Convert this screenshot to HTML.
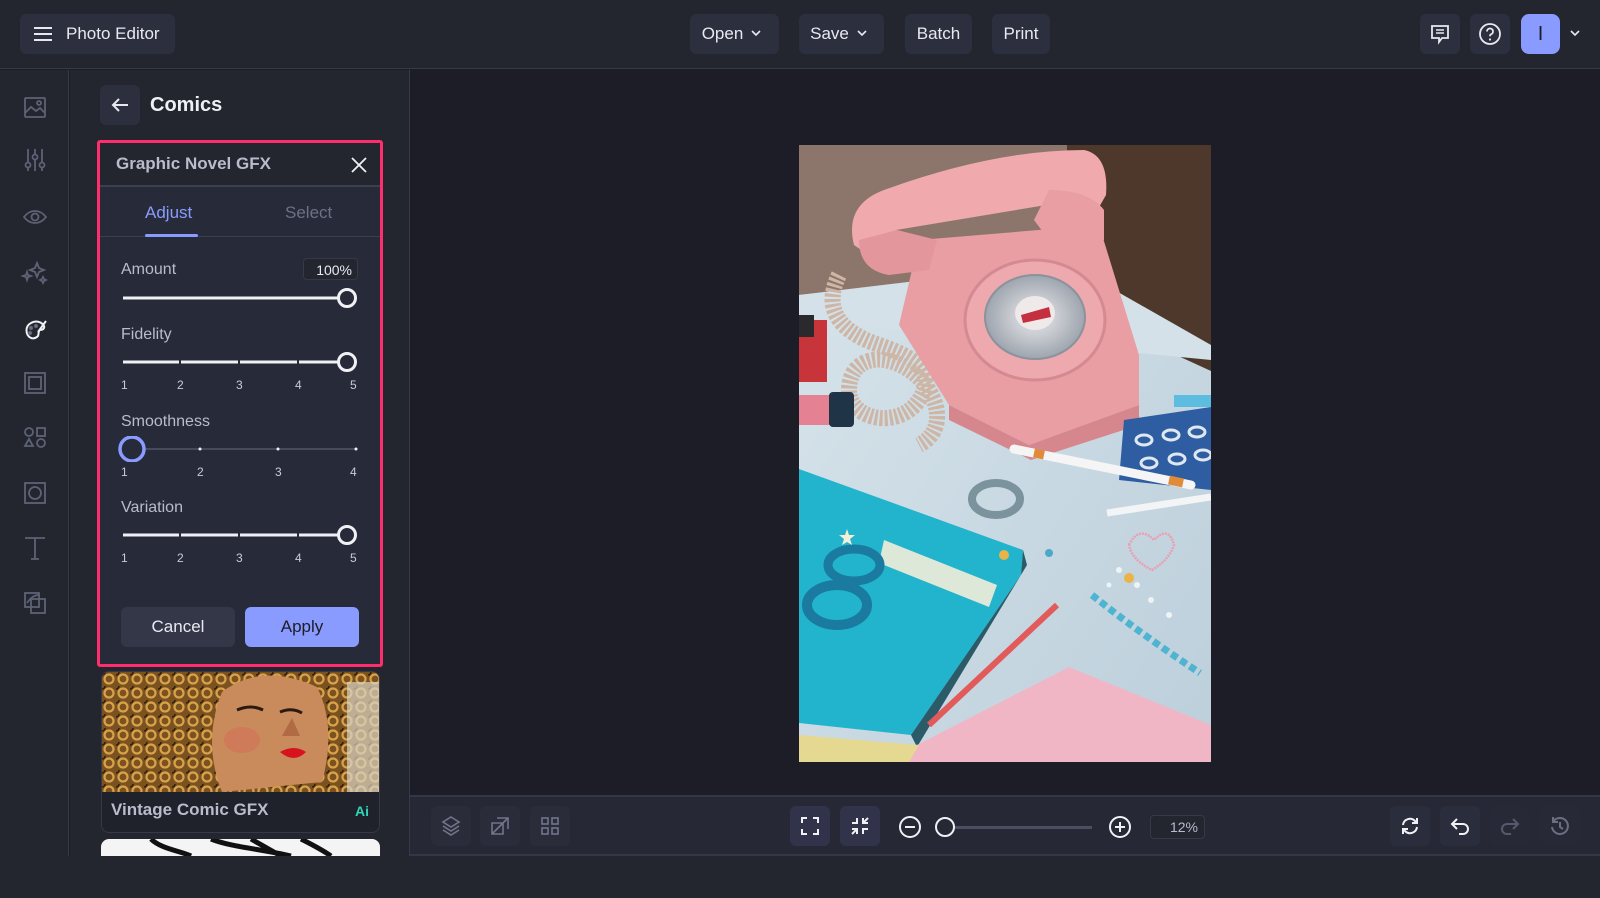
<!DOCTYPE html>
<html><head><meta charset="utf-8"><style>
*{box-sizing:border-box;margin:0;padding:0}
body{width:1600px;height:898px;background:#1c1d26;font-family:"Liberation Sans",sans-serif;color:#e8e9f0;position:relative;overflow:hidden}
.abs{position:absolute}
.btn{position:absolute;background:#2c2f3d;border-radius:6px;color:#e8e9f0;font-size:17px;display:flex;align-items:center;justify-content:center}
.tb{position:absolute;width:40px;height:40px;border-radius:6px;background:#2a2d3b;display:flex;align-items:center;justify-content:center}
.lbl{position:absolute;left:121px;font-size:16px;color:#b9bccb}
.num{position:absolute;font-size:12px;color:#c9ccd8}
svg{display:block}
</style></head><body>
<!-- top bar -->
<div class="abs" style="left:0;top:0;width:1600px;height:69px;background:#23252f;border-bottom:1px solid #363947"></div>
<div class="btn" style="left:20px;top:14px;width:155px;height:40px;justify-content:flex-start;padding-left:12px">
<svg width="22" height="18"><path d="M2 3h18M2 9h18M2 15h18" stroke="#e8e9f0" stroke-width="2"/></svg><span style="margin-left:12px">Photo Editor</span></div>
<div class="btn" style="left:690px;top:14px;width:89px;height:40px">Open<svg width="24" height="12"><path d="M9 3l4 4 4-4" stroke="#e8e9f0" stroke-width="1.6" fill="none"/></svg></div>
<div class="btn" style="left:799px;top:14px;width:85px;height:40px">Save<svg width="24" height="12"><path d="M9 3l4 4 4-4" stroke="#e8e9f0" stroke-width="1.6" fill="none"/></svg></div>
<div class="btn" style="left:905px;top:14px;width:67px;height:40px">Batch</div>
<div class="btn" style="left:992px;top:14px;width:58px;height:40px">Print</div>
<div class="btn" style="left:1420px;top:14px;width:40px;height:40px"><svg width="22" height="22"><path d="M3 3h16v12h-6l-3 4v-4H3z" stroke="#e8e9f0" stroke-width="1.8" fill="none"/><path d="M7 7h8M7 10h8" stroke="#e8e9f0" stroke-width="1.6"/></svg></div>
<div class="btn" style="left:1470px;top:14px;width:40px;height:40px"><svg width="24" height="24"><circle cx="12" cy="12" r="10" stroke="#e8e9f0" stroke-width="1.8" fill="none"/><path d="M9 9.5a3 3 0 1 1 4 2.8c-1 .4-1 1-1 2" stroke="#e8e9f0" stroke-width="1.8" fill="none"/><circle cx="12" cy="17.5" r="1.1" fill="#e8e9f0"/></svg></div>
<div class="btn" style="left:1521px;top:14px;width:39px;height:40px;background:#8a9bff;border-radius:8px;color:#1c1d26;font-size:20px">I</div>
<svg class="abs" style="left:1568px;top:28px" width="14" height="10"><path d="M3 3l4 4 4-4" stroke="#e8e9f0" stroke-width="1.6" fill="none"/></svg>

<!-- left rail -->
<div class="abs" style="left:0;top:70px;width:69px;height:786px;background:#23252f;border-right:1px solid #363947"></div>
<div class="abs" style="left:70px;top:70px;width:340px;height:786px;background:#23252f;border-right:1px solid #363947"></div>
<svg class="abs" style="left:0;top:70px" width="69" height="560" fill="none" stroke="#5d6275" stroke-width="1.8">
<rect x="25" y="28" width="20" height="19" rx="1"/><path d="M25 43l6-6 5 4 4-3 5 5"/><circle cx="39" cy="33" r="2"/>
<path d="M28 79v22M35 79v22M42 79v22"/><circle cx="28" cy="95" r="2.5" fill="#23252f"/><circle cx="35" cy="87" r="2.5" fill="#23252f"/><circle cx="42" cy="95" r="2.5" fill="#23252f"/>
<path d="M24 147c6-8 16-8 22 0c-6 8-16 8-22 0z"/><circle cx="35" cy="147" r="3.5"/>
<path d="M37 193l2 5 5 2-5 2-2 5-2-5-5-2 5-2z M27 202l1 3 3 1-3 1-1 3-1-3-3-1 3-1z M43 207l1 2 2 1-2 1-1 2-1-2-2-1 2-1z"/>
<path d="M31 268c-6-3-6-12 0-15 5-3 11-1 13 3 1 3-2 4-4 4-2 1-1 4-2 6-2 2-4 3-7 2z" stroke="#f0f1f5" stroke-width="2"/><circle cx="31" cy="258" r="1.3" fill="#f0f1f5"/><circle cx="36" cy="256" r="1.3" fill="#f0f1f5"/><circle cx="30" cy="263" r="1.3" fill="#f0f1f5"/><path d="M38 262l8-11" stroke="#f0f1f5" stroke-width="2"/>
<rect x="25" y="303" width="20" height="20"/><rect x="29" y="307" width="12" height="12"/>
<circle cx="29" cy="362" r="4"/><rect x="37" y="358" width="8" height="8"/><path d="M25 376l4-7 4 7z"/><circle cx="41" cy="373" r="4"/>
<rect x="25" y="413" width="20" height="20"/><circle cx="35" cy="423" r="6"/>
<path d="M25 468h20M35 468v21M31 489h8"/>
<rect x="25" y="523" width="14" height="14"/><rect x="31" y="529" width="14" height="14"/><path d="M27 533c4-6 8-8 12-8"/>
</svg>

<!-- panel header -->
<div class="btn" style="left:100px;top:85px;width:40px;height:40px"><svg width="20" height="16"><path d="M18 8H3M9 2L3 8l6 6" stroke="#e8e9f0" stroke-width="2" fill="none"/></svg></div>
<div class="abs" style="left:150px;top:94px;font-size:20px;font-weight:bold;color:#eef0f5">Comics</div>

<!-- pink box -->
<div class="abs" style="left:97px;top:140px;width:286px;height:527px;border:3px solid #ff2d6b;border-radius:3px;background:#272a38"></div>
<div class="abs" style="left:100px;top:143px;width:280px;height:44px;background:#23252f;border-bottom:2px solid #3b3f50"></div>
<div class="abs" style="left:116px;top:154px;font-size:17px;font-weight:bold;color:#b9bccb">Graphic Novel GFX</div>
<svg class="abs" style="left:350px;top:156px" width="18" height="18"><path d="M2 2l14 14M16 2L2 16" stroke="#f0f1f5" stroke-width="1.8"/></svg>
<div class="abs" style="left:100px;top:236px;width:280px;height:1px;background:#3b3f50"></div>
<div class="abs" style="left:145px;top:203px;font-size:17px;color:#8a9bff">Adjust</div>
<div class="abs" style="left:145px;top:234px;width:53px;height:3px;background:#8a9bff;border-radius:2px"></div>
<div class="abs" style="left:285px;top:203px;font-size:17px;color:#6d7185">Select</div>

<div class="lbl" style="top:261px">Amount</div>
<div class="abs" style="left:303px;top:258px;width:55px;height:22px;border:1px solid #363947;border-radius:4px;background:#23252f;font-size:14px;text-align:right;padding:3px 5px 0 0">100%</div>
<svg class="abs" style="left:115px;top:285px" width="250" height="30">
<path d="M8 13H232" stroke="#f0f1f5" stroke-width="3"/><circle cx="232" cy="13" r="8.5" fill="#272a38" stroke="#f0f1f5" stroke-width="3"/></svg>

<div class="lbl" style="top:326px">Fidelity</div>
<svg class="abs" style="left:115px;top:350px" width="250" height="26">
<path d="M8 12H232" stroke="#f0f1f5" stroke-width="3"/><path d="M65 10v4M124 10v4M183 10v4" stroke="#272a38" stroke-width="2"/><circle cx="232" cy="12" r="8.5" fill="#272a38" stroke="#f0f1f5" stroke-width="3"/></svg>
<div class="num" style="left:121px;top:378px">1</div><div class="num" style="left:177px;top:378px">2</div><div class="num" style="left:236px;top:378px">3</div><div class="num" style="left:295px;top:378px">4</div><div class="num" style="left:350px;top:378px">5</div>

<div class="lbl" style="top:413px">Smoothness</div>
<svg class="abs" style="left:115px;top:436px" width="250" height="26">
<path d="M18 13H242" stroke="#464a5c" stroke-width="2"/><circle cx="85" cy="13" r="1.5" fill="#f0f1f5"/><circle cx="163" cy="13" r="1.5" fill="#f0f1f5"/><circle cx="241" cy="13" r="1.5" fill="#f0f1f5"/><circle cx="17" cy="13" r="12" fill="#272a38" stroke="#8a9bff" stroke-width="3.5"/></svg>
<div class="num" style="left:121px;top:465px">1</div><div class="num" style="left:197px;top:465px">2</div><div class="num" style="left:275px;top:465px">3</div><div class="num" style="left:350px;top:465px">4</div>

<div class="lbl" style="top:499px">Variation</div>
<svg class="abs" style="left:115px;top:523px" width="250" height="26">
<path d="M8 12H232" stroke="#f0f1f5" stroke-width="3"/><path d="M65 10v4M124 10v4M183 10v4" stroke="#272a38" stroke-width="2"/><circle cx="232" cy="12" r="8.5" fill="#272a38" stroke="#f0f1f5" stroke-width="3"/></svg>
<div class="num" style="left:121px;top:551px">1</div><div class="num" style="left:177px;top:551px">2</div><div class="num" style="left:236px;top:551px">3</div><div class="num" style="left:295px;top:551px">4</div><div class="num" style="left:350px;top:551px">5</div>

<div class="btn" style="left:121px;top:607px;width:114px;height:40px;background:#343747">Cancel</div>
<div class="btn" style="left:245px;top:607px;width:114px;height:40px;background:#8a9bff;color:#1c1d26">Apply</div>

<!-- card -->
<div class="abs" style="left:101px;top:671px;width:279px;height:162px;border:1px solid #363947;border-radius:8px;background:#1f212b;overflow:hidden">
<svg width="279" height="120" style="display:block">
<defs><pattern id="curl" width="14" height="14" patternUnits="userSpaceOnUse"><rect width="14" height="14" fill="#7a5220"/><circle cx="7" cy="7" r="4.5" fill="none" stroke="#d9a24a" stroke-width="2.2"/><circle cx="0" cy="0" r="3" fill="none" stroke="#2e1c0c" stroke-width="1.5"/></pattern></defs>
<rect width="279" height="120" fill="url(#curl)"/><rect x="245" y="10" width="34" height="110" fill="#d9d4c4" opacity=".7"/>
<path d="M120 20q40-30 95-5q20 40 5 95l-100 10q-20-50 0-100z" fill="#c98a5c"/>
<ellipse cx="140" cy="68" rx="18" ry="13" fill="#d66a55" opacity=".5"/>
<path d="M135 38q14-6 26 0M178 40q12-5 22 1" stroke="#2a1a12" stroke-width="3" fill="none"/>
<path d="M180 64l10-18 8 18z" fill="#b06a44"/>
<path d="M178 80q14-8 26 0q-12 12-26 0z" fill="#d7141e"/></svg>
<div style="position:absolute;left:9px;top:128px;font-size:17px;font-weight:bold;color:#b9bccb">Vintage Comic GFX</div>
<div style="position:absolute;right:10px;top:131px;font-size:14px;font-weight:bold;color:#2fd6b5">Ai</div>
</div>
<div class="abs" style="left:101px;top:839px;width:279px;height:17px;background:#f4f4f4;border-radius:8px 8px 0 0;overflow:hidden"><svg width="279" height="17"><path d="M50 0c10 10 30 12 40 17M110 0c20 8 50 10 80 17M150 0l30 17M200 0c10 5 20 10 30 17" stroke="#111" stroke-width="5" fill="none"/></svg></div>

<!-- photo -->
<svg class="abs" style="left:799px;top:145px" width="412" height="617">
<defs>
<linearGradient id="tb" x1="0" y1="0" x2="1" y2="1"><stop offset="0" stop-color="#d9e5ec"/><stop offset="1" stop-color="#bccfdb"/></linearGradient>
<radialGradient id="dl" cx=".5" cy=".5" r=".5"><stop offset="0" stop-color="#e4e4e8"/><stop offset=".45" stop-color="#c9ccd2"/><stop offset="1" stop-color="#9ea5ae"/></radialGradient>
</defs>
<rect width="412" height="617" fill="url(#tb)"/>
<path d="M0 0H268V120L0 150z" fill="#8c766b"/>
<path d="M268 0H412V226L268 160z" fill="#4e382c"/>
<path d="M0 150L268 118 412 200 412 215 0 175z" fill="#d4e1e9"/>
<!-- cord -->
<path d="M40 130c-20 40 10 60 40 70s60 25 40 55-70 20-70-10 30-40 60-20 40 60 10 75" stroke="#cdb6a5" stroke-width="16" fill="none" stroke-dasharray="3 2"/>
<!-- phone body -->
<path d="M120 95L300 80 340 210 340 260 230 300 150 260 100 180z" fill="#e99ea4"/>
<path d="M150 260L230 300 340 260 340 280 232 315 150 275z" fill="#d6878e"/>
<ellipse cx="236" cy="175" rx="70" ry="60" fill="#eda9ae" stroke="#d48a90" stroke-width="3"/>
<ellipse cx="236" cy="172" rx="50" ry="42" fill="url(#dl)" stroke="#8a929c" stroke-width="2"/>
<ellipse cx="236" cy="168" rx="20" ry="17" fill="#efeae9"/><path d="M222 170l28-8 2 10-28 6z" fill="#c53040"/>
<!-- handset -->
<path d="M55 100q-10-40 30-55q110-40 200-40q25 5 22 45l-20 35-40-25-150 25-20 30z" fill="#f0aaae"/>
<path d="M60 95q0 30 30 35l40-5 8-30-40-10z" fill="#e3979c"/>
<path d="M250 45q40 0 55 20l0 30-40 20-30-40z" fill="#e89ea3"/>
<!-- left objects -->
<rect x="0" y="175" width="28" height="62" fill="#c7343a"/><rect x="0" y="170" width="15" height="22" fill="#2a2a2e"/>
<rect x="0" y="250" width="40" height="30" fill="#e48293"/><rect x="30" y="247" width="25" height="35" rx="4" fill="#1f3446"/>
<!-- patterned paper -->
<path d="M325 275L412 262V345L320 335z" fill="#2f5da2"/>
<g fill="none" stroke="#dfe8f0" stroke-width="3"><ellipse cx="345" cy="295" rx="8" ry="5"/><ellipse cx="372" cy="290" rx="8" ry="5"/><ellipse cx="398" cy="287" rx="8" ry="5"/><ellipse cx="350" cy="318" rx="8" ry="5"/><ellipse cx="378" cy="314" rx="8" ry="5"/><ellipse cx="404" cy="310" rx="8" ry="5"/></g>
<rect x="375" y="250" width="37" height="12" fill="#5cbde0"/>
<!-- pens -->
<path d="M215 304L392 340" stroke="#f5f5f5" stroke-width="9" stroke-linecap="round"/><path d="M235 308l10 2M370 335l14 3" stroke="#e08a3a" stroke-width="9"/>
<path d="M308 368L412 352" stroke="#f2f4f6" stroke-width="7"/>
<ellipse cx="197" cy="354" rx="24" ry="16" fill="none" stroke="#7a939c" stroke-width="8"/>
<!-- book -->
<path d="M0 324L224 405 222 430 112 590 0 578z" fill="#22b4cc"/>
<path d="M224 405L228 420 118 602 112 590 222 430z" fill="#2b5a68"/>
<path d="M85 395L198 440 190 462 80 418z" fill="#dde8d8"/>
<ellipse cx="55" cy="420" rx="26" ry="16" fill="none" stroke="#1a7aa0" stroke-width="9"/>
<ellipse cx="38" cy="460" rx="30" ry="20" fill="none" stroke="#1a7aa0" stroke-width="10"/>
<path d="M40 390l5 4-2 6 5-3 5 3-2-6 5-4h-6l-2-6-2 6z" fill="#f4efd8"/>
<!-- pink paper -->
<path d="M118 600L270 522 412 580 412 617 110 617z" fill="#f0b6c6"/>
<path d="M130 580L258 460" stroke="#e35a5a" stroke-width="6"/>
<path d="M0 590L120 600 110 617 0 617z" fill="#e5d890"/>
<!-- beads -->
<path d="M293 450q50 40 108 78" stroke="#4fb3d2" stroke-width="7" fill="none" stroke-dasharray="7 4"/>
<path d="M330 400q10-20 25-5q15-15 20 5q-5 15-22 25q-20-10-23-25z" fill="none" stroke="#e9a0b0" stroke-width="2.5" stroke-dasharray="2 1"/>
<g fill="#eef3f6"><circle cx="320" cy="425" r="3"/><circle cx="338" cy="440" r="3"/><circle cx="352" cy="455" r="3"/><circle cx="370" cy="470" r="3"/><circle cx="310" cy="440" r="2.5"/></g>
<circle cx="330" cy="433" r="5" fill="#e8b347"/><circle cx="205" cy="410" r="5" fill="#e8b347"/><circle cx="250" cy="408" r="4" fill="#4aa9c9"/>
</svg>

<!-- bottom toolbar -->
<div class="abs" style="left:410px;top:795px;width:1190px;height:61px;background:#262836;border-top:2px solid #343747;border-bottom:2px solid #343747"></div>
<div class="abs" style="left:0;top:856px;width:1600px;height:42px;background:#23252f"></div>
<div class="tb" style="left:431px;top:806px;background:#2a2c39"><svg width="22" height="24" fill="none" stroke="#70758a" stroke-width="1.6"><path d="M11 3l8 5-8 5-8-5z M3 12l8 5 8-5 M3 16l8 5 8-5"/></svg></div>
<div class="tb" style="left:480px;top:806px;background:#2a2c39"><svg width="22" height="22" fill="none" stroke="#70758a" stroke-width="1.6"><path d="M8 3h11v11M3 8h11v11H3z M3 19L19 3"/></svg></div>
<div class="tb" style="left:530px;top:806px;background:#2a2c39"><svg width="22" height="22" fill="none" stroke="#70758a" stroke-width="1.6"><rect x="3" y="3" width="6" height="6"/><rect x="13" y="3" width="6" height="6"/><rect x="3" y="13" width="6" height="6"/><rect x="13" y="13" width="6" height="6"/></svg></div>
<div class="tb" style="left:790px;top:806px;background:#30334a"><svg width="22" height="22" fill="none" stroke="#f0f1f5" stroke-width="2"><path d="M3 8V3h5M14 3h5v5M19 14v5h-5M8 19H3v-5"/></svg></div>
<div class="tb" style="left:840px;top:806px;background:#30334a"><svg width="22" height="22" fill="none" stroke="#f0f1f5" stroke-width="2"><path d="M3 8h5V3M14 3v5h5M19 14h-5v5M8 19v-5H3M14 8l5-5M3 19l5-5"/></svg></div>
<svg class="abs" style="left:898px;top:815px" width="24" height="24"><circle cx="12" cy="12" r="10" stroke="#f0f1f5" stroke-width="2" fill="none"/><path d="M7 12h10" stroke="#f0f1f5" stroke-width="2"/></svg>
<div class="abs" style="left:945px;top:826px;width:147px;height:3px;background:#4a4e60"></div>
<div class="abs" style="left:935px;top:817px;width:20px;height:20px;border-radius:50%;border:2.5px solid #f0f1f5;background:#262836"></div>
<svg class="abs" style="left:1108px;top:815px" width="24" height="24"><circle cx="12" cy="12" r="10" stroke="#f0f1f5" stroke-width="2" fill="none"/><path d="M7 12h10M12 7v10" stroke="#f0f1f5" stroke-width="2"/></svg>
<div class="abs" style="left:1150px;top:815px;width:55px;height:24px;border:1px solid #363947;border-radius:4px;background:#23252f;font-size:14px;color:#b9bccb;text-align:right;padding:3px 6px 0 0">12%</div>
<div class="tb" style="left:1390px;top:806px"><svg width="24" height="24" fill="none" stroke="#f0f1f5" stroke-width="2"><path d="M5 11a7 7 0 0 1 12-4l2 2M19 13a7 7 0 0 1-12 4l-2-2M19 4v5h-5M5 20v-5h5"/></svg></div>
<div class="tb" style="left:1440px;top:806px"><svg width="24" height="24" fill="none" stroke="#f0f1f5" stroke-width="2"><path d="M9 5L4 10l5 5M4 10h11a5 5 0 0 1 0 10h-4"/></svg></div>
<div class="tb" style="left:1490px;top:806px;background:#272936"><svg width="24" height="24" fill="none" stroke="#555a6c" stroke-width="2"><path d="M15 5l5 5-5 5M20 10H9a5 5 0 0 0 0 10h4"/></svg></div>
<div class="tb" style="left:1540px;top:806px;background:#272936"><svg width="24" height="24" fill="none" stroke="#6a6f82" stroke-width="2"><path d="M5 8a8 8 0 1 1-1 5M5 3v5h5M12 8v5l3 2"/></svg></div>
</body></html>
